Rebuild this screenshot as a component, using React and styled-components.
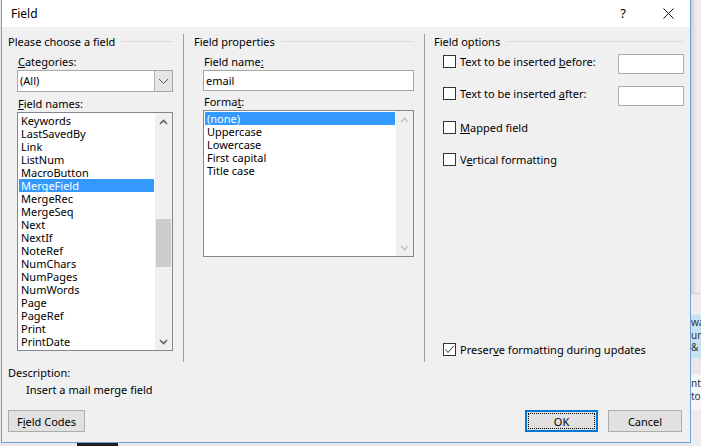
import React from "react";
import styled, { createGlobalStyle } from "styled-components";

const GlobalStyle = createGlobalStyle`
  html, body {
    margin: 0;
    padding: 0;
    background: #e6e6e6;
  }
  body {
    font-family: "Noto Sans", "Liberation Sans", sans-serif;
    font-size: 11px;
    color: #000;
  }
`;

const fieldNames = [
  "Keywords",
  "LastSavedBy",
  "Link",
  "ListNum",
  "MacroButton",
  "MergeField",
  "MergeRec",
  "MergeSeq",
  "Next",
  "NextIf",
  "NoteRef",
  "NumChars",
  "NumPages",
  "NumWords",
  "Page",
  "PageRef",
  "Print",
  "PrintDate",
];

const formats = ["(none)", "Uppercase", "Lowercase", "First capital", "Title case"];

const Chevron = ({ up, disabled }) => (
  <svg width="9" height="6" viewBox="0 0 9 6">
    <polyline
      points={up ? "1,5 4.5,1.5 8,5" : "1,1 4.5,4.5 8,1"}
      fill="none"
      stroke={disabled ? "#c3c3c3" : "#606060"}
      strokeWidth="1.6"
    />
  </svg>
);

const Check = () => (
  <svg width="11" height="11" viewBox="0 0 11 11">
    <polyline points="1.5,5.5 4,8.5 9.5,2" fill="none" stroke="#333" strokeWidth="1" />
  </svg>
);

const App = () => (
  <>
    <GlobalStyle />
    <Screen>
      <LeftArea>
        <Dialog>
          <TitleBar>
            <Title>Field</Title>
            <TitleButtons>
              <HelpMark>?</HelpMark>
              <svg width="11" height="11" viewBox="0 0 11 11">
                <path d="M0.5 0.5 L10.5 10.5 M10.5 0.5 L0.5 10.5" stroke="#111" strokeWidth="1" />
              </svg>
            </TitleButtons>
          </TitleBar>

          <Body>
            <Column $width={182} $padLeft={6} $padRight={10}>
              <GroupHeader>
                <span>Please choose a field</span>
                <Rule />
              </GroupHeader>
              <Indent>
                <Label $top={5}>
                  <u>C</u>ategories:
                </Label>
                <Select>
                  <SelectValue>(All)</SelectValue>
                  <SelectButton>
                    <svg width="11" height="7" viewBox="0 0 11 7">
                      <polyline points="1,1 5.5,5.5 10,1" fill="none" stroke="#555" strokeWidth="1" />
                    </svg>
                  </SelectButton>
                </Select>
                <Label $top={4}>
                  <u>F</u>ield names:
                </Label>
                <ListBox $height={239} $top={1}>
                  <Items>
                    {fieldNames.map((name) => (
                      <Item key={name} $selected={name === "MergeField"}>
                        {name}
                      </Item>
                    ))}
                  </Items>
                  <ScrollBar>
                    <Arrow>
                      <Chevron up />
                    </Arrow>
                    <Track>
                      <Thumb />
                    </Track>
                    <Arrow>
                      <Chevron />
                    </Arrow>
                  </ScrollBar>
                </ListBox>
              </Indent>
            </Column>

            <Column $width={241} $padLeft={10} $padRight={10}>
              <GroupHeader>
                <span>Field properties</span>
                <Rule />
              </GroupHeader>
              <Indent>
                <Label $top={5}>
                  Field name<u>:</u>
                </Label>
                <TextInput>email</TextInput>
                <Label $top={3}>
                  Forma<u>t</u>:
                </Label>
                <ListBox $height={147} $top={1}>
                  <Items>
                    {formats.map((f) => (
                      <Item key={f} $selected={f === "(none)"}>
                        {f}
                      </Item>
                    ))}
                  </Items>
                  <ScrollBar>
                    <Arrow>
                      <Chevron up disabled />
                    </Arrow>
                    <Track />
                    <Arrow>
                      <Chevron disabled />
                    </Arrow>
                  </ScrollBar>
                </ListBox>
              </Indent>
            </Column>

            <Column $width={265} $padLeft={9} $padRight={6} $last>
              <GroupHeader>
                <span>Field options</span>
                <Rule />
              </GroupHeader>
              <Options>
                <OptionRow>
                  <Box />
                  <OptionText>
                    Text to be inserted <u>b</u>efore:
                  </OptionText>
                  <SmallInput />
                </OptionRow>
                <OptionRow>
                  <Box />
                  <OptionText>
                    Text to be inserted <u>a</u>fter:
                  </OptionText>
                  <SmallInput />
                </OptionRow>
                <OptionRow>
                  <Box $top={2} />
                  <OptionText $top={2}>
                    <u>M</u>apped field
                  </OptionText>
                </OptionRow>
                <OptionRow>
                  <Box $top={2} />
                  <OptionText $top={2}>
                    V<u>e</u>rtical formatting
                  </OptionText>
                </OptionRow>
                <Spacer />
                <OptionRow $last>
                  <Box>
                    <Check />
                  </Box>
                  <OptionText>
                    Preser<u>v</u>e formatting during updates
                  </OptionText>
                </OptionRow>
              </Options>
            </Column>
          </Body>

          <DescTitle>Description:</DescTitle>
          <DescText>Insert a mail merge field</DescText>

          <Footer>
            <Button $width={77}>
              F<u>i</u>eld Codes
            </Button>
            <Spacer />
            <Button $width={73} $primary>
              <FocusRing>OK</FocusRing>
            </Button>
            <Button $width={74}>Cancel</Button>
          </Footer>
        </Dialog>
        <BottomStrip>
          <DarkBlock />
        </BottomStrip>
      </LeftArea>

      <RightStrip>
        <StripPart $height={293} $bg="linear-gradient(90deg, #cfcfcf, #ececec 5px)" />
        <StripPart $height={1} $bg="#d0d0d0" />
        <StripPart $height={21} $bg="#ececec" />
        <BlueBand>
          <span>wa</span>
          <span>um</span>
          <span>&amp; e</span>
        </BlueBand>
        <StripPart $height={16} $bg="#e8e8e8" />
        <StripText>
          <span>nt</span>
          <span>to</span>
        </StripText>
        <StripPart $height={40} $bg="#ececec" />
      </RightStrip>
    </Screen>
  </>
);

const Screen = styled.div`
  width: 701px;
  height: 446px;
  display: flex;
  overflow: hidden;
  background: #e6e6e6;
`;

const LeftArea = styled.div`
  display: flex;
  flex-direction: column;
  width: 691px;
`;

const Dialog = styled.div`
  margin-left: 1px;
  width: 690px;
  height: 443px;
  box-sizing: border-box;
  border: 1px solid #6f9fd8;
  border-top: none;
  background: #f0f0f0;
  display: flex;
  flex-direction: column;
`;

const TitleBar = styled.div`
  height: 27px;
  background: #fff;
  display: flex;
  align-items: center;
  justify-content: space-between;
  padding: 0 16px 0 9px;
`;

const Title = styled.div`
  font-size: 12px;
`;

const TitleButtons = styled.div`
  display: flex;
  align-items: center;
  gap: 37px;
`;

const HelpMark = styled.span`
  font-size: 13px;
  line-height: 1;
`;

const Body = styled.div`
  display: flex;
  margin-top: 7px;
  height: 328px;
`;

const Column = styled.div`
  width: ${(p) => p.$width}px;
  box-sizing: border-box;
  padding: 0 ${(p) => p.$padRight}px 0 ${(p) => p.$padLeft}px;
  border-right: ${(p) => (p.$last ? "none" : "1px solid #a0a0a0")};
  display: flex;
  flex-direction: column;
`;

const GroupHeader = styled.div`
  display: flex;
  align-items: center;
  height: 15px;
  line-height: 15px;
  white-space: nowrap;
`;

const Rule = styled.div`
  flex: 1;
  height: 1px;
  background: #dcdcdc;
  margin-left: 6px;
`;

const Indent = styled.div`
  padding-left: 9px;
  display: flex;
  flex-direction: column;
`;

const Label = styled.div`
  margin-top: ${(p) => p.$top}px;
  padding-left: 1px;
  height: 15px;
  line-height: 15px;
`;

const Select = styled.div`
  margin-top: 1px;
  height: 22px;
  box-sizing: border-box;
  border: 1px solid #a6a6a6;
  background: #fff;
  display: flex;
`;

const SelectValue = styled.div`
  flex: 1;
  padding-left: 2px;
  line-height: 20px;
`;

const SelectButton = styled.div`
  width: 17px;
  background: #e5e5e5;
  border-left: 1px solid #b4b4b4;
  display: flex;
  align-items: center;
  justify-content: center;
`;

const TextInput = styled.div`
  margin-top: 1px;
  height: 21px;
  box-sizing: border-box;
  border: 1px solid #a6a6a6;
  background: #fff;
  padding-left: 2px;
  line-height: 19px;
`;

const ListBox = styled.div`
  margin-top: ${(p) => p.$top}px;
  height: ${(p) => p.$height}px;
  box-sizing: border-box;
  border: 1px solid #828790;
  background: #fff;
  display: flex;
`;

const Items = styled.div`
  flex: 1;
  padding: 1px;
  overflow: hidden;
`;

const Item = styled.div`
  height: 13px;
  line-height: 13px;
  padding-left: 2px;
  white-space: nowrap;
  background: ${(p) => (p.$selected ? "#3399ff" : "transparent")};
  color: ${(p) => (p.$selected ? "#fff" : "#000")};
`;

const ScrollBar = styled.div`
  width: 17px;
  background: #f0f0f0;
  display: flex;
  flex-direction: column;
`;

const Arrow = styled.div`
  height: 17px;
  display: flex;
  align-items: center;
  justify-content: center;
`;

const Track = styled.div`
  flex: 1;
  padding-top: 89px;
`;

const Thumb = styled.div`
  height: 48px;
  margin: 0 1px;
  background: #cdcdcd;
`;

const Options = styled.div`
  flex: 1;
  display: flex;
  flex-direction: column;
  padding-left: 9px;
  padding-top: 5px;
`;

const OptionRow = styled.div`
  display: flex;
  align-items: flex-start;
  height: 20px;
  margin-bottom: ${(p) => (p.$last ? 0 : 12)}px;
`;

const Box = styled.div`
  width: 13px;
  height: 13px;
  box-sizing: border-box;
  margin-top: ${(p) => (p.$top || 0) + 1}px;
  border: 1px solid #333;
  background: #fff;
  display: flex;
  align-items: center;
  justify-content: center;
`;

const OptionText = styled.div`
  flex: 1;
  margin-top: ${(p) => p.$top || 0}px;
  padding-left: 4px;
  line-height: 15px;
  white-space: nowrap;
`;

const SmallInput = styled.div`
  width: 66px;
  height: 20px;
  box-sizing: border-box;
  border: 1px solid #ababab;
  background: #fff;
`;

const Spacer = styled.div`
  flex: 1;
`;

const DescTitle = styled.div`
  margin: 3px 0 0 6px;
  line-height: 15px;
`;

const DescText = styled.div`
  margin: 2px 0 0 24px;
  line-height: 15px;
`;

const Footer = styled.div`
  display: flex;
  gap: 10px;
  margin-top: 13px;
  padding: 0 8px 0 6px;
`;

const Button = styled.div`
  width: ${(p) => p.$width}px;
  height: 22px;
  box-sizing: border-box;
  border: ${(p) => (p.$primary ? "2px solid #0078d7" : "1px solid #adadad")};
  background: #e1e1e1;
  display: flex;
  align-items: center;
  justify-content: center;
  padding: ${(p) => (p.$primary ? "1px" : "0")};
  white-space: nowrap;
`;

const FocusRing = styled.div`
  flex: 1;
  align-self: stretch;
  border: 1px dotted #000;
  display: flex;
  align-items: center;
  justify-content: center;
`;

const BottomStrip = styled.div`
  flex: 1;
  background: #e8e8e8;
  padding-left: 77px;
`;

const DarkBlock = styled.div`
  width: 41px;
  height: 100%;
  background: #1e1e1e;
`;

const RightStrip = styled.div`
  flex: 1;
  display: flex;
  flex-direction: column;
  overflow: hidden;
  font-size: 10px;
  color: #333;
`;

const StripPart = styled.div`
  height: ${(p) => p.$height}px;
  flex-shrink: 0;
  background: ${(p) => p.$bg};
`;

const BlueBand = styled.div`
  height: 42px;
  flex-shrink: 0;
  background: #c6e1f0;
  display: flex;
  flex-direction: column;
  padding-top: 1px;
  line-height: 12.5px;
  white-space: nowrap;
`;

const StripText = styled.div`
  height: 33px;
  flex-shrink: 0;
  background: #f6f6f6;
  display: flex;
  flex-direction: column;
  padding-top: 3px;
  line-height: 13px;
  white-space: nowrap;
`;

export default App;
